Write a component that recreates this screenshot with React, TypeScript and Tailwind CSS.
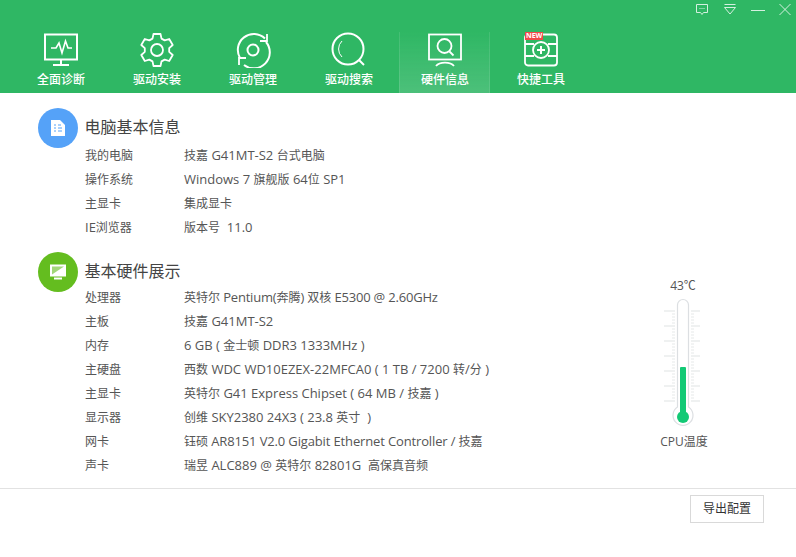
const tabs = [
  { label: '全面诊断', icon: <DiagnoseIcon /> },
  { label: '驱动安装', icon: <GearIcon /> },
  { label: '驱动管理', icon: <RefreshIcon /> },
  { label: '驱动搜索', icon: <SearchIcon /> },
  { label: '硬件信息', icon: <HardwareIcon />, active: true },
  { label: '快捷工具', icon: <ToolsIcon /> },
];

const basicInfo = [
  ['我的电脑', '技嘉 G41MT-S2 台式电脑'],
  ['操作系统', 'Windows 7 旗舰版 64位 SP1'],
  ['主显卡', '集成显卡'],
  ['IE浏览器', '版本号  11.0'],
];

const hardwareInfo = [
  ['处理器', '英特尔 Pentium(奔腾) 双核 E5300 @ 2.60GHz', 'tracking-[-0.2px]'],
  ['主板', '技嘉 G41MT-S2'],
  ['内存', '6 GB ( 金士顿 DDR3 1333MHz )'],
  ['主硬盘', '西数 WDC WD10EZEX-22MFCA0 ( 1 TB / 7200 转/分 )'],
  ['主显卡', '英特尔 G41 Express Chipset ( 64 MB / 技嘉 )'],
  ['显示器', '创维 SKY2380 24X3 ( 23.8 英寸  )'],
  ['网卡', '钰硕 AR8151 V2.0 Gigabit Ethernet Controller / 技嘉', 'tracking-[-0.14px]'],
  ['声卡', '瑞昱 ALC889 @ 英特尔 82801G  高保真音频'],
];

function DiagnoseIcon() {
  return (
    <svg width="36" height="34" viewBox="0 0 36 34" fill="none" stroke="white" strokeWidth="2">
      <rect x="2" y="1.500" width="32" height="25" />
      <path d="M8 15h5l3-5 3 10 3.500-12 2.500 7h4" strokeWidth="1.600" />
      <path d="M18 27v4M10 32h16" />
    </svg>
  );
}

function GearIcon() {
  return (
    <svg width="36" height="36" viewBox="0 0 36 36" fill="none" stroke="white" strokeWidth="1.800">
      <path d="M14.500 2h7l1 4.600 3.200 1.800 4.500-1.400 3.500 6-3.500 3.200v3.600l3.500 3.200-3.500 6-4.500-1.400-3.200 1.800-1 4.600h-7l-1-4.600-3.200-1.800-4.500 1.400-3.500-6 3.500-3.200v-3.600L2.300 13l3.500-6 4.500 1.400 3.200-1.800z" strokeLinejoin="round" />
      <circle cx="18" cy="18" r="6" />
    </svg>
  );
}

function RefreshIcon() {
  return (
    <svg width="36" height="36" viewBox="0 0 36 36" fill="none" stroke="white" strokeWidth="2">
      <path d="M5 26A16 16 0 0 1 30 6.500" />
      <path d="M31 10a16 16 0 0 1-22 23" />
      <path d="M25 9h7V2" strokeWidth="1.800" />
      <path d="M11 26H4v7" strokeWidth="1.800" />
      <circle cx="18" cy="18" r="5.500" />
    </svg>
  );
}

function SearchIcon() {
  return (
    <svg width="36" height="36" viewBox="0 0 36 36" fill="none" stroke="white" strokeWidth="2">
      <circle cx="17" cy="17" r="15.500" />
      <path d="M11 9a11 11 0 0 0 0 16" strokeWidth="1" />
      <path d="M28 28l5 5" />
    </svg>
  );
}

function HardwareIcon() {
  return (
    <svg width="36" height="34" viewBox="0 0 36 34" fill="none" stroke="white" strokeWidth="1.800">
      <rect x="2" y="1.500" width="32" height="25" />
      <circle cx="17.500" cy="13" r="7" />
      <path d="M22.500 18.500l4 4" />
      <path d="M9 33a10 6 0 0 1 18 0" />
    </svg>
  );
}

function ToolsIcon() {
  return (
    <svg width="36" height="34" viewBox="0 0 36 34" fill="none" stroke="white" strokeWidth="1.800">
      <rect x="2" y="1.500" width="32" height="31" rx="3" />
      <circle cx="18" cy="17" r="8" />
      <path d="M18 13v8M14 17h8" strokeWidth="2" />
      <path d="M2 11h9M25 11h9M2 23h9M25 23h9" />
    </svg>
  );
}

function Thermometer() {
  const major = [14, 29, 44, 59, 74, 89, 104];
  const minor = Array.from({ length: 31 }, (_, i) => 14 + i * 3).filter((y) => (y - 14) % 15 !== 0);
  return (
    <svg width="38" height="132" viewBox="0 0 38 132" fill="none">
      {major.map((y) => (
        <path key={y} d={`M0 ${y}h11M27 ${y}h9`} stroke="#dfe3e3" />
      ))}
      {minor.map((y) => (
        <path key={y} d={`M8 ${y}h3M27 ${y}h3`} stroke="#e6e9e9" />
      ))}
      <path
        d="M13.500 110V8a5.500 5.500 0 0 1 11 0v102a10 10 0 1 1-11 0z"
        fill="white"
        stroke="#dcdfe2"
        strokeWidth="1.200"
      />
      <rect x="16" y="70" width="6" height="46" rx="1" fill="#13c975" />
      <circle cx="19" cy="120" r="6" fill="#13c975" />
    </svg>
  );
}

// latin runs are a bit bigger than the CJK ones in the original
function MixedText({ text, tracking }: { text: string; tracking?: string }) {
  const parts = text.split(/([\u4e00-\u9fff]+)/).filter(Boolean);
  return (
    <>
      {parts.map((part, i) =>
        /[\u4e00-\u9fff]/.test(part) ? (
          <span key={i}>{part}</span>
        ) : (
          <span key={i} className={`text-[13px] ${tracking ?? ''}`}>{part}</span>
        ),
      )}
    </>
  );
}

function InfoSection({
  title,
  icon,
  color,
  rows,
  rowsClass,
  className,
}: {
  title: string;
  icon: React.ReactNode;
  color: string;
  rows: string[][];
  rowsClass: string;
  className?: string;
}) {
  return (
    <section className={className}>
      <div className="flex items-center gap-[7px]">
        <div className={`w-10 h-10 rounded-full flex items-center justify-center ${color}`}>{icon}</div>
        <h2 className="text-[16px] leading-[22px] text-[#444] -mt-[2px] -ml-[0.5px]">{title}</h2>
      </div>
      <div className={`ml-[47px] ${rowsClass}`}>
        {rows.map(([label, value, tracking], i) => (
          <div key={i} className="flex h-6 items-center text-[12px] text-[#555]">
            <span className="w-[99px] shrink-0">
              <MixedText text={label} />
            </span>
            <span className="whitespace-pre">
              <MixedText text={value} tracking={tracking} />
            </span>
          </div>
        ))}
      </div>
    </section>
  );
}

const App = () => {
  return (
    <div
      className="w-[796px] h-[557px] flex flex-col bg-white overflow-hidden"
      style={{ fontFamily: '"Open Sans", "Noto Sans CJK SC", sans-serif' }}
    >
      <header className="relative h-[93px] shrink-0 bg-[#2fb764] flex items-end pl-[13px]">
        <div className="absolute top-[3px] right-[5px] flex items-center gap-[14px]">
          <svg width="14" height="13" viewBox="0 0 14 13" fill="none" stroke="white" opacity="0.8">
            <path d="M1.500 1.500h11v8H8.500L7 11.500 5.500 9.500H1.500z" />
            <path d="M4.500 5.500h5" strokeDasharray="1 1" />
          </svg>
          <svg width="14" height="13" viewBox="0 0 14 13" fill="none" stroke="white" opacity="0.8">
            <path d="M1.500 1.500h11M1.500 4.500h11L7 11z" />
          </svg>
          <svg width="14" height="13" viewBox="0 0 14 13" fill="none" stroke="white" opacity="0.8">
            <path d="M0 7.500h14" />
          </svg>
          <svg width="12" height="13" viewBox="0 0 12 13" fill="none" stroke="white" opacity="0.8">
            <path d="M0.500 1l11 11M11.500 1L0.500 12" />
          </svg>
        </div>
        {tabs.map((tab) => (
          <div key={tab.label} className="relative w-[96px] h-[61px] flex flex-col items-center">
            {tab.active && (
              <div className="absolute left-[2px] right-[3px] bottom-0 h-[61px] bg-gradient-to-b from-transparent to-[#4cc07a] border-x border-white/10" />
            )}
            <div className="relative h-[36px] flex items-center">{tab.icon}</div>
            {tab.label === '快捷工具' && (
              <span className="absolute left-[32px] top-[0px] bg-[#ef4a4a] text-white text-[7px] leading-[8px] font-bold px-[1px]">NEW</span>
            )}
            <span className="relative mt-[4px] text-[12px] leading-[16px] font-medium text-white">{tab.label}</span>
          </div>
        ))}
      </header>

      <main className="flex flex-1 min-h-0 pl-[38px] pt-[15px]">
        <div className="w-[590px]">
          <InfoSection
            title="电脑基本信息"
            color="bg-[#55a2f8]"
            rows={basicInfo}
            rowsClass="-mt-[4px]"
            icon={
              <svg width="14" height="16" viewBox="0 0 14 16">
                <path d="M0 0h9l5 5v11H0z" fill="white" />
                <path d="M3 5h2M7 5h3M3 8h2M7 8h4M3 11h2M7 11h4" stroke="#55a2f8" />
              </svg>
            }
          />
          <InfoSection
            title="基本硬件展示"
            color="bg-[#64bd1f]"
            rows={hardwareInfo}
            rowsClass="-mt-[6px]"
            className="mt-[12px]"
            icon={
              <svg width="18" height="16" viewBox="0 0 18 16">
                <rect x="1" y="0.500" width="16" height="12" fill="white" />
                <path d="M3 10.500V2.500h12z" fill="#64bd1f" opacity="0.6" />
                <path d="M5 14.500h8" stroke="white" strokeWidth="2" />
              </svg>
            }
          />
        </div>
        <div className="w-[90px] ml-[11px] pt-[169px] flex flex-col items-center text-[12px] text-[#555]">
          <span className="-ml-[2px] leading-[18px]">43℃</span>
          <div className="mt-[2px] -ml-[2px]">
            <Thermometer />
          </div>
          <span className="mt-[4px] leading-[18px]">CPU温度</span>
        </div>
      </main>

      <footer className="h-[69px] shrink-0 border-t border-[#e2e2e2] flex justify-end items-start pt-[6px] pr-[32px]">
        <button className="w-[74px] h-[28px] border border-[#d9d9d9] bg-white text-[12px] text-[#333]">导出配置</button>
      </footer>
    </div>
  );
};

export default App;
